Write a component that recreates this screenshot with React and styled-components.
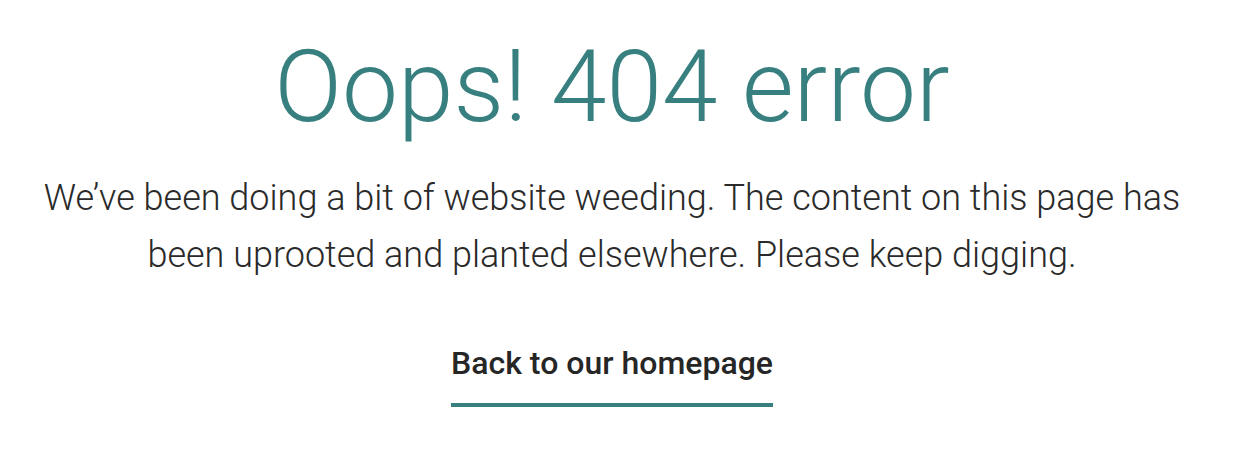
import React from "react";
import styled, { createGlobalStyle } from "styled-components";

const Global = createGlobalStyle`
  html, body { margin: 0; padding: 0; background: #fff; }
  body { font-family: Roboto, "Liberation Sans", sans-serif; }
`;

const Page = styled.main`
  display: flex;
  flex-direction: column;
  align-items: center;
  text-align: center;
  padding: 27px 24px 0 0;
`;

const Title = styled.h1`
  margin: 0;
  font-family: Roboto, sans-serif;
  font-weight: 300;
  font-size: 100px;
  line-height: 120px;
  color: #387f80;
`;

const Lead = styled.p`
  margin: 23px 0 0;
  max-width: 1160px;
  font-family: Roboto, sans-serif;
  font-weight: 300;
  font-size: 36px;
  line-height: 57px;
  color: #2a2a2a;
`;

const HomeLink = styled.a`
  margin-top: 60px;
  display: inline-block;
  font-family: Roboto, sans-serif;
  font-weight: 500;
  font-size: 32px;
  line-height: 38px;
  color: #262626;
  text-decoration: none;
  padding-bottom: 21px;
  border-bottom: 4px solid #387f80;
`;

export default function App() {
  return (
    <>
      <Global />
      <Page>
        <Title>Oops! 404 error</Title>
        <Lead>
          We’ve been doing a bit of website weeding. The content on this page has been uprooted and planted elsewhere. Please keep digging.
        </Lead>
        <HomeLink href="#">Back to our homepage</HomeLink>
      </Page>
    </>
  );
}
